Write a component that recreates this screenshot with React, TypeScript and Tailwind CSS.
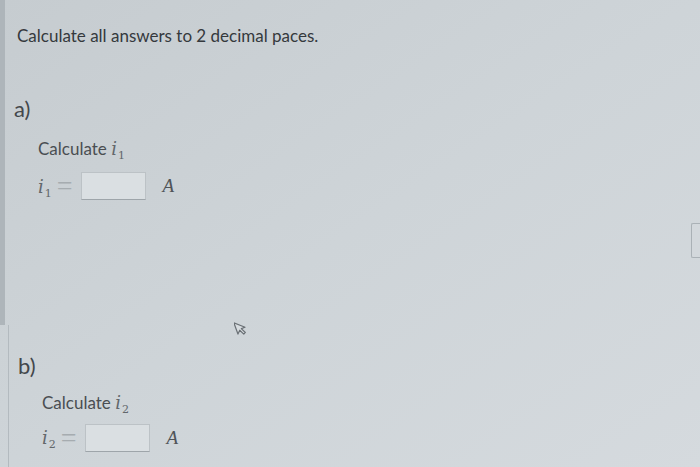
import React from "react";

const MathVar: React.FC<{ sub: string }> = ({ sub }) => (
  <span className="text-[#62676b]" style={{ fontFamily: "'DejaVu Serif', serif" }}>
    <span className="italic text-[18px]">i</span>
    <span className="relative top-[4px] ml-[1px] text-[11px]">{sub}</span>
  </span>
);

const AnswerRow: React.FC<{ sub: string }> = ({ sub }) => (
  <div className="flex items-center">
    <MathVar sub={sub} />
    <span
      className="ml-[5px] text-[28px] leading-none text-[#a6acb0]"
      style={{ fontFamily: "'Liberation Serif', serif" }}
    >
      =
    </span>
    <div className="ml-[8px] h-[28px] w-[65px] border border-[#bcc2c6] border-b-[#9ea5aa] bg-[#dadfe2]" />
    <span
      className="ml-[17px] text-[19px] italic text-[#505458]"
      style={{ fontFamily: "'Liberation Serif', serif" }}
    >
      A
    </span>
  </div>
);

const Part: React.FC<{
  label: string;
  sub: string;
  className?: string;
  gap: string;
  rowGap: string;
}> = ({ label, sub, className, gap, rowGap }) => (
  <div className={className}>
    <div className="text-[22px] leading-[30px] text-[#43474b]">{label}</div>
    <div className="ml-[24px]">
      <div className={`${gap} text-[17px] leading-[25px] text-[#4a4e52]`}>
        Calculate <MathVar sub={sub} />
      </div>
      <div className={rowGap}>
        <AnswerRow sub={sub} />
      </div>
    </div>
  </div>
);

export default function App() {
  return (
    <div
      className="relative flex h-[467px] w-[700px] overflow-hidden bg-linear-to-br from-[#c6ccd0] via-[#ced4d8] to-[#d5dade]"
      style={{ fontFamily: "Lato, 'Liberation Sans', sans-serif" }}
    >
      <div className="flex w-[10px] flex-col">
        <div className="h-[325px] w-[5px] bg-[#aeb5ba]" />
        <div className="ml-[8px] w-px flex-1 bg-[#b3babf]" />
      </div>

      <div className="flex-1">
        <div className="pl-[7px] pt-[23px] text-[17px] leading-[25px] text-[#35393d]">
          Calculate all answers to 2 decimal paces.
        </div>

        <Part
          label="a)"
          sub="1"
          gap="mt-[12px]"
          rowGap="mt-[8px]"
          className="ml-[4px] mt-[46px]"
        />
        <Part
          label="b)"
          sub="2"
          gap="mt-[9px]"
          rowGap="mt-[6px]"
          className="ml-[8px] mt-[150px]"
        />
      </div>

      <div className="absolute right-0 top-[223px] h-[35px] w-[9px] rounded-l-[2px] border border-r-0 border-[#aab1b6] bg-[#d3d8dc]" />

      <svg
        className="absolute left-[234px] top-[319px]"
        width="14"
        height="18"
        viewBox="0 0 14 18"
      >
        <path
          d="M2 2 L2 14 L5 11 L7.5 16 L9.5 15 L7 10 L11 10 Z"
          fill="#d8dde0"
          stroke="#6a7075"
          strokeWidth="1.2"
          strokeLinejoin="round"
          transform="rotate(-20 6 9)"
        />
      </svg>
    </div>
  );
}
